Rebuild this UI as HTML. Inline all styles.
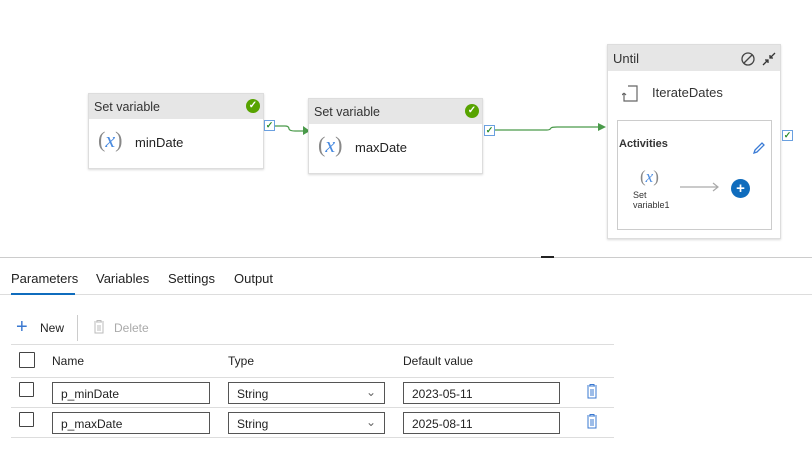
<!DOCTYPE html>
<html><head><style>
*{box-sizing:border-box;margin:0;padding:0}
body{width:812px;height:472px;background:#fff;font-family:"Liberation Sans",sans-serif;color:#222;position:relative;overflow:hidden;font-size:12px}
.a{position:absolute}
.card{position:absolute;background:#fff;border:1px solid #ddd;box-shadow:0 1px 2px rgba(0,0,0,.15)}
.hd{background:#e6e6e6;height:25px;font-size:12.5px;padding:6px 5px;color:#333}
.ok{position:absolute;width:14px;height:14px;border-radius:50%;background:#57a300;color:#fff;font-size:10px;text-align:center;line-height:14px;font-weight:bold}
.x{font-family:"Liberation Serif",serif;font-size:22px;color:#888}
.x i{color:#4a8be0}
.cb{position:absolute;width:11px;height:11px;border:1px solid #6aa0e0;background:#fff;color:#2a8a2a;font-size:9px;line-height:9px;text-align:center;font-weight:bold}
.tab{position:absolute;top:271px;font-size:13px;color:#222}
.chk{position:absolute;width:15px;height:15px;border:1px solid #444;border-radius:1px;left:19px}
.in{position:absolute;height:22px;border:1px solid #555;font-size:12px;padding:4px 8px;color:#222}
.line{position:absolute;left:11px;width:603px;height:1px;background:#ddd}
.th{position:absolute;top:354px;font-size:12px;color:#222}
</style></head><body>
<div class="card" style="left:88px;top:93px;width:176px;height:76px">
<div class="hd">Set variable</div>
<div class="ok" style="left:157px;top:5px">✓</div>
<div class="a x" style="left:9px;top:33px">(<i>x</i>)</div>
<div class="a" style="left:46px;top:41px;font-size:13px">minDate</div>
</div>
<div class="cb" style="left:264px;top:120px">✓</div>
<svg class="a" style="left:275px;top:120px" width="40" height="16"><path d="M0 6 H10 Q14 6 14 9 Q15 11 20 11 H28" stroke="#4a9a4a" fill="none" stroke-width="1.2"/><path d="M28 6 L35 11 L28 15Z" fill="#4a9a4a"/></svg>
<div class="card" style="left:308px;top:98px;width:175px;height:76px">
<div class="hd">Set variable</div>
<div class="ok" style="left:156px;top:5px">✓</div>
<div class="a x" style="left:9px;top:33px">(<i>x</i>)</div>
<div class="a" style="left:46px;top:41px;font-size:13px">maxDate</div>
</div>
<div class="cb" style="left:484px;top:125px">✓</div>
<svg class="a" style="left:495px;top:120px" width="115" height="16"><path d="M0 10 H52 Q55 10 56 8 Q57 7 62 7 H104" stroke="#4a9a4a" fill="none" stroke-width="1.2"/><path d="M103 3 L111 7 L103 11Z" fill="#4a9a4a"/></svg>
<div class="card" style="left:607px;top:44px;width:174px;height:195px">
<div class="hd" style="height:26px;font-size:13px">Until</div>
<svg class="a" style="left:133px;top:6px" width="36" height="16"><circle cx="7" cy="8" r="6" stroke="#444" fill="none" stroke-width="1.3"/><path d="M3 12 L11 4" stroke="#444" stroke-width="1.3"/><path d="M22 14 L27 9 M24 9 H27 V12 M34 2 L29 7 M29 4 V7 H32" stroke="#333" stroke-width="1.3" fill="none"/></svg>
<svg class="a" style="left:14px;top:38px" width="18" height="20"><path d="M6 3 H15 V18 H2 V10 M2 10 L0 12 M2 10 L4 12" stroke="#666" fill="none" stroke-width="1.2"/></svg>
<div class="a" style="left:44px;top:40px;font-size:13px;color:#333">IterateDates</div>
<div class="a" style="left:9px;top:75px;width:155px;height:110px;border:1px solid #ccc">
<div class="a" style="left:1px;top:17px;font-size:11px;font-weight:bold;color:#333">Activities</div>
<svg class="a" style="left:134px;top:20px" width="14" height="14"><path d="M2 12 L3 9 L10 2 L12 4 L5 11Z" stroke="#3a7bd5" fill="none" stroke-width="1.3"/></svg>
<div class="a x" style="left:22px;top:46px;font-size:17px">(<i>x</i>)</div>
<div class="a" style="left:15px;top:69px;font-size:9px;line-height:10px;color:#333">Set<br>variable1</div>
<svg class="a" style="left:62px;top:61px" width="42" height="10"><path d="M0 5 H38 M33 1 L38 5 L33 9" stroke="#aaa" fill="none" stroke-width="1.2"/></svg>
<div class="a" style="left:113px;top:58px;width:19px;height:19px;border-radius:50%;background:#0f6cbd;color:#fff;text-align:center;line-height:19px;font-weight:bold;font-size:15px">+</div>
</div>
</div>
<div class="cb" style="left:782px;top:130px">✓</div>
<div class="a" style="left:0;top:257px;width:812px;height:1px;background:#ccc"></div>
<div class="a" style="left:541px;top:256px;width:13px;height:2px;background:#222"></div>
<div class="tab" style="left:11px">Parameters</div>
<div class="tab" style="left:96px">Variables</div>
<div class="tab" style="left:168px">Settings</div>
<div class="tab" style="left:234px">Output</div>
<div class="a" style="left:0;top:294px;width:812px;height:1px;background:#ddd"></div>
<div class="a" style="left:11px;top:293px;width:64px;height:2px;background:#0f6cbd"></div>
<div class="a" style="left:16px;top:316px;font-size:20px;color:#3a78d0;font-weight:300">+</div>
<div class="a" style="left:40px;top:321px;font-size:12px">New</div>
<div class="a" style="left:77px;top:315px;width:1px;height:26px;background:#ccc"></div>
<svg class="a" style="left:93px;top:320px" width="12" height="14"><path d="M1 2 H11 M4 2 V0.5 H8 V2 M2 3 V13 H10 V3 M5 5 V11 M7 5 V11" stroke="#bbb" fill="none"/></svg>
<div class="a" style="left:114px;top:321px;font-size:12px;color:#aaa">Delete</div>
<div class="line" style="top:344px"></div>
<div class="chk" style="top:352px;width:16px;height:16px"></div>
<div class="th" style="left:52px">Name</div>
<div class="th" style="left:228px">Type</div>
<div class="th" style="left:403px">Default value</div>
<div class="line" style="top:377px"></div>
<div class="chk" style="top:382px"></div>
<div class="in" style="left:52px;top:382px;width:158px">p_minDate</div>
<div class="in" style="left:228px;top:382px;width:157px">String<span style="position:absolute;right:8px;top:2px;color:#666">⌄</span></div>
<div class="in" style="left:403px;top:382px;width:157px">2023-05-11</div>
<svg class="a" style="left:586px;top:384px" width="12" height="15"><path d="M1 2 H11 M4 2 V0.5 H8 V2 M2 3 V14 H10 V3 M5 5 V12 M7 5 V12" stroke="#3a78d0" fill="none"/></svg>
<div class="line" style="top:407px"></div>
<div class="chk" style="top:412px"></div>
<div class="in" style="left:52px;top:412px;width:158px">p_maxDate</div>
<div class="in" style="left:228px;top:412px;width:157px">String<span style="position:absolute;right:8px;top:2px;color:#666">⌄</span></div>
<div class="in" style="left:403px;top:412px;width:157px">2025-08-11</div>
<svg class="a" style="left:586px;top:414px" width="12" height="15"><path d="M1 2 H11 M4 2 V0.5 H8 V2 M2 3 V14 H10 V3 M5 5 V12 M7 5 V12" stroke="#3a78d0" fill="none"/></svg>
<div class="line" style="top:437px"></div>
</body></html>
